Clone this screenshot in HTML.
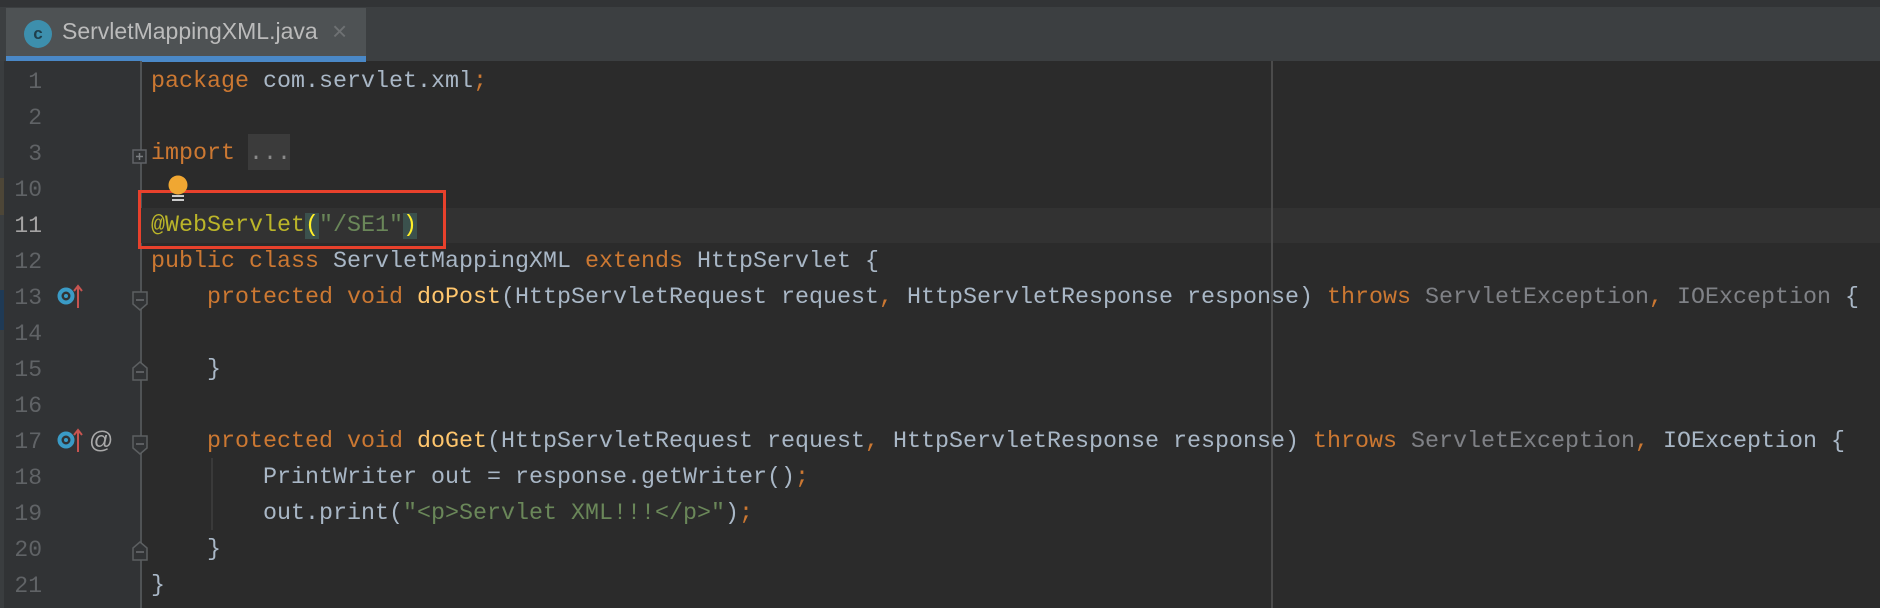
<!DOCTYPE html>
<html><head><meta charset="utf-8"><style>
body{margin:0;width:1880px;height:608px;overflow:hidden;background:#2b2b2b;position:relative;font-family:"Liberation Mono",monospace}
.abs{position:absolute}
.ln{position:absolute;left:0;width:42px;text-align:right;font-size:23px;color:#606366;height:36px;line-height:36px}
.cl{position:absolute;left:151px;white-space:pre;font-size:23.33px;line-height:36px;height:36px;color:#a9b7c6}
.k{color:#cc7832}.m{color:#ffc66d}.s{color:#6a8759}.a{color:#bbb529}.g{color:#7f8186}
.pb{background:#3b514d;color:#ffef28}
</style></head><body>
<div class="abs" style="left:0;top:0;width:1880px;height:61px;background:#3c3f41"></div>
<div class="abs" style="left:0;top:0;width:1880px;height:7px;background:#323436"></div>
<div class="abs" style="left:6px;top:8px;width:360px;height:48px;background:#4e5254"></div>
<div class="abs" style="left:6px;top:56px;width:360px;height:6px;background:#4a88c7"></div>
<div class="abs" style="left:24px;top:20px;width:28px;height:28px;border-radius:50%;background:#3d8fad;color:#1f3f4c;font:bold 17px 'Liberation Sans',sans-serif;text-align:center;line-height:28px">c</div>
<div class="abs" style="left:62px;top:18px;font:23px 'Liberation Sans',sans-serif;color:#bbbbbb">ServletMappingXML.java</div>
<div class="abs" style="left:332px;top:16px;font:26px 'Liberation Sans',sans-serif;color:#6e7173">×</div>
<div class="abs" style="left:0;top:61px;width:140px;height:547px;background:#313335"></div>
<div class="abs" style="left:0;top:61px;width:4px;height:547px;background:#3a3d3f"></div>
<div class="abs" style="left:0;top:178px;width:4px;height:37px;background:#4d4637"></div>
<div class="abs" style="left:0;top:290px;width:4px;height:40px;background:#1f3a55"></div>
<div class="abs" style="left:140px;top:61px;width:1.5px;height:547px;background:#505355"></div>
<div class="abs" style="left:141px;top:208px;width:1739px;height:35px;background:#323232"></div>
<div class="abs" style="left:1271px;top:61px;width:1.5px;height:547px;background:#4b4b4b"></div>
<div class="abs" style="left:211px;top:458px;width:1.5px;height:72px;background:#3a3a3a"></div>
<div class="abs" style="left:248px;top:134px;width:42px;height:36px;background:#3b3b3b"></div>

<div class="ln" style="top:64px">1</div>
<div class="ln" style="top:100px">2</div>
<div class="ln" style="top:136px">3</div>
<div class="ln" style="top:172px">10</div>
<div class="ln" style="top:208px;color:#a4a3a3">11</div>
<div class="ln" style="top:244px">12</div>
<div class="ln" style="top:280px">13</div>
<div class="ln" style="top:316px">14</div>
<div class="ln" style="top:352px">15</div>
<div class="ln" style="top:388px">16</div>
<div class="ln" style="top:424px">17</div>
<div class="ln" style="top:460px">18</div>
<div class="ln" style="top:496px">19</div>
<div class="ln" style="top:532px">20</div>
<div class="ln" style="top:568px">21</div>

<div class="cl" style="top:64px"><span class="k">package</span> com.servlet.xml<span class="k">;</span></div>
<div class="cl" style="top:136px"><span class="k">import</span> <span style="color:#8a8a8a">...</span></div>
<div class="cl" style="top:208px"><span class="a">@WebServlet</span><span class="pb">(</span><span class="s">"/SE1"</span><span class="pb">)</span></div>
<div class="cl" style="top:244px"><span class="k">public class</span> ServletMappingXML <span class="k">extends</span> HttpServlet {</div>
<div class="cl" style="top:280px">    <span class="k">protected void</span> <span class="m">doPost</span>(HttpServletRequest request<span class="k">,</span> HttpServletResponse response) <span class="k">throws</span> <span class="g">ServletException</span><span class="k">,</span> <span class="g">IOException</span> {</div>
<div class="cl" style="top:352px">    }</div>
<div class="cl" style="top:424px">    <span class="k">protected void</span> <span class="m">doGet</span>(HttpServletRequest request<span class="k">,</span> HttpServletResponse response) <span class="k">throws</span> <span class="g">ServletException</span><span class="k">,</span> IOException {</div>
<div class="cl" style="top:460px">        PrintWriter out = response.getWriter()<span class="k">;</span></div>
<div class="cl" style="top:496px">        out.print(<span class="s">"&lt;p&gt;Servlet XML!!!&lt;/p&gt;"</span>)<span class="k">;</span></div>
<div class="cl" style="top:532px">    }</div>
<div class="cl" style="top:568px">}</div>

<svg class="abs" style="left:0;top:0" width="1880" height="608">
<rect x="139.5" y="191.5" width="305" height="56" fill="none" stroke="#e8412c" stroke-width="3"/>
<circle cx="178" cy="185" r="9.5" fill="#f0a732"/>
<rect x="172" y="195" width="12" height="2" fill="#ccc"/><rect x="172" y="199" width="12" height="2" fill="#ccc"/>
<rect x="133" y="150" width="13" height="13" fill="#313335" stroke="#606366" stroke-width="1.5"/>
<path d="M136 156.5h7M139.5 153v7" stroke="#7a7d80" stroke-width="1.5"/>
<g fill="#313335" stroke="#5c5f61" stroke-width="1.5">
<path d="M133 292h14v12l-7 6l-7-6z"/><path d="M133 436h14v12l-7 6l-7-6z"/>
<path d="M133 380h14v-12l-7-6l-7 6z"/><path d="M133 560h14v-12l-7-6l-7 6z"/>
</g>
<g stroke="#6a6d70" stroke-width="1.5"><path d="M136 300h8M136 444h8M136 372h8M136 552h8"/></g>
<g><circle cx="66" cy="296" r="6.5" fill="none" stroke="#3a9bc6" stroke-width="4"/><circle cx="66" cy="296" r="2" fill="#3a9bc6"/>
<path d="M78 308V287M74 291l4-5l4 5" stroke="#c75450" stroke-width="2" fill="none"/>
<circle cx="66" cy="440" r="6.5" fill="none" stroke="#3a9bc6" stroke-width="4"/><circle cx="66" cy="440" r="2" fill="#3a9bc6"/>
<path d="M78 452V431M74 435l4-5l4 5" stroke="#c75450" stroke-width="2" fill="none"/></g>
<text x="89" y="448" font-family="Liberation Sans,sans-serif" font-size="24" fill="#a9a9a9">@</text>
</svg>
</body></html>
